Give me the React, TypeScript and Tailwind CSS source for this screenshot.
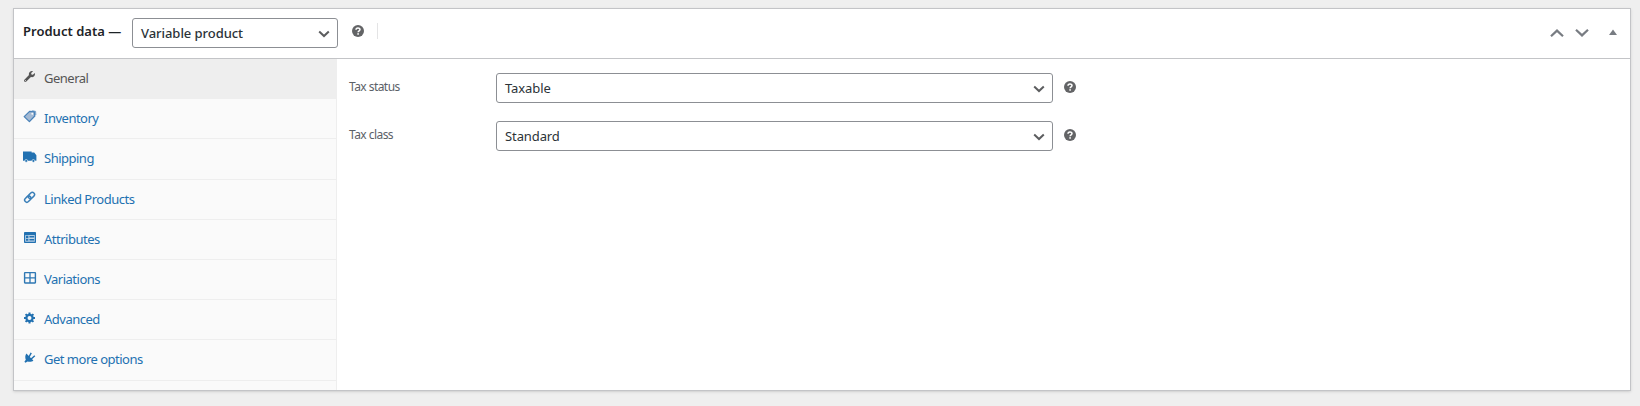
import React from 'react'
import { FaWrench } from 'react-icons/fa'

const TagIcon = () => (
  <svg className="w-3.5 h-3.5" viewBox="0 0 14 14">
    <path
      d="M1.2 6.6 6.6 1.4 11.2 1.6 11.8 6 6.4 11.6Z"
      fill="#a3b9d3"
      stroke="#4a82b8"
      strokeWidth="1.3"
      strokeLinejoin="round"
    />
    <circle cx="9.3" cy="3.7" r="1" fill="#fafafa" />
    <path d="M9.2 .8 12.6 1.4 12.8 5" fill="none" stroke="#5f8fc0" strokeWidth=".9" />
  </svg>
)

const TruckIcon = () => (
  <svg className="w-3.5 h-3.5" viewBox="0 0 14 14" fill="#2271b1">
    <path d="M0 1.4h8.6v1.2h2.6l2.2 2.6v5.6H0z" />
    <circle cx="3.2" cy="10.9" r="1.4" stroke="#fafafa" strokeWidth=".6" />
    <circle cx="10.4" cy="10.9" r="1.4" stroke="#fafafa" strokeWidth=".6" />
  </svg>
)

const LinkIcon = () => (
  <svg
    className="w-3.5 h-3.5"
    viewBox="0 0 14 14"
    fill="none"
    stroke="#3a7fb8"
    strokeWidth="1.5"
  >
    <rect x="4.9" y="2.3" width="7" height="4.4" rx="2.2" transform="rotate(-45 8.4 4.5)" />
    <rect x="1.3" y="5.9" width="7" height="4.4" rx="2.2" transform="rotate(-45 4.8 8.1)" />
  </svg>
)

const AttributesIcon = () => (
  <svg className="w-3.5 h-3.5" viewBox="0 0 14 14">
    <rect x="1" y="1" width="12" height="11" rx=".8" fill="#2271b1" />
    <rect x="2.2" y="4.1" width="9.6" height="6.6" fill="#c3d7e9" />
    <path
      d="M3 4.8h2.4v2.2H3zM6.4 5h4.8v1.5H6.4zM3 7.8h2.4v2H3zM6.4 8h4.8v1.5H6.4z"
      fill="#2271b1"
    />
  </svg>
)

const GridIcon = () => (
  <svg className="w-3.5 h-3.5" viewBox="0 0 14 14" fill="none" stroke="#2f78b4">
    <rect x="1.6" y="1.6" width="10.8" height="10.4" rx=".4" strokeWidth="1.4" />
    <path d="M7 1.6v10.4M1.6 6.8h10.8" strokeWidth="1.3" />
  </svg>
)

const CogIcon = () => (
  <svg className="w-3.5 h-3.5" viewBox="0 0 14 14" fill="none" stroke="#2271b1">
    <circle cx="6.5" cy="7" r="3.1" strokeWidth="2.2" />
    <path
      d="M6.5 1.5v2M6.5 10.5v2M1 7h2M10 7h2M2.6 3.1l1.4 1.4M9 9.5l1.4 1.4M2.6 10.9 4 9.5M9 4.5l1.4-1.4"
      strokeWidth="2"
    />
  </svg>
)

const PlugIcon = () => (
  <svg className="w-3.5 h-3.5" viewBox="0 0 14 14" fill="#2271b1">
    <path d="M3.4 2.6 10.4 9.4C8.8 11 6.4 11.2 4.6 10.4L2.4 11.8 1.4 10.8 2.8 8.8C2 7 2 4.4 3.4 2.6Z" />
    <path d="M6 6 8.2 1.8M8.2 8 11.8 4.8" stroke="#2271b1" strokeWidth="1.5" />
  </svg>
)

const HelpIcon = () => (
  <svg className="w-3 h-3 shrink-0" viewBox="0 0 12 12">
    <circle cx="6" cy="6" r="6" fill="#636466" />
    <path
      d="M4 4.7C4 2.4 8 2.4 8 4.6 8 5.9 6.1 5.8 6.1 7.3"
      fill="none"
      stroke="#fff"
      strokeWidth="1.5"
    />
    <rect x="5.3" y="8.2" width="1.6" height="1.5" fill="#fff" />
  </svg>
)

const tabs = [
  { label: 'General', icon: <FaWrench className="w-[11px] h-[11px] ml-px mt-px" />, active: true },
  { label: 'Inventory', icon: <TagIcon /> },
  { label: 'Shipping', icon: <TruckIcon /> },
  { label: 'Linked Products', icon: <LinkIcon /> },
  { label: 'Attributes', icon: <AttributesIcon /> },
  { label: 'Variations', icon: <GridIcon /> },
  { label: 'Advanced', icon: <CogIcon /> },
  { label: 'Get more options', icon: <PlugIcon /> },
]

interface SelectBoxProps {
  value: string
  className: string
}

const SelectBox: React.FC<SelectBoxProps> = ({ value, className }) => (
  <button
    className={`flex items-center justify-between h-[30px] shrink-0 border border-[#8c8f94] rounded-[3px] bg-white pl-2 pr-[7px] text-[#2c3338] ${className}`}
  >
    <span>{value}</span>
    <svg className="w-3 h-3 mt-px" viewBox="0 0 12 12" fill="none" stroke="#5c5d5f">
      <path d="M1.2 3.6 6 8.1l4.8-4.5" strokeWidth="2" />
    </svg>
  </button>
)

const fields = [
  { label: 'Tax status', value: 'Taxable' },
  { label: 'Tax class', value: 'Standard' },
]

const App: React.FC = () => {
  return (
    <div className="h-[406px] bg-[#efefef] pt-2 pl-[13px] pr-[9px] font-['Noto_Sans','Open_Sans',sans-serif] text-[13px] leading-5 whitespace-nowrap">
      <div className="flex flex-col h-[383px] bg-white border border-[#c3c4c7] shadow-sm">
        <div className="flex h-[50px] shrink-0 border-b border-[#c3c4c7] pl-[9px] pr-[13px]">
          <h2 className="w-[109px] pt-3 font-semibold tracking-[0.02px] text-[#1d2327]">
            Product data —
          </h2>
          <div className="pt-[9px]">
            <SelectBox value="Variable product" className="w-[206px] font-medium tracking-[-0.05px]" />
          </div>
          <div className="pt-4 ml-3.5">
            <HelpIcon />
          </div>
          <div className="w-px h-4 mt-3.5 ml-[13px] bg-[#e4e4e5]" />
          <div className="flex items-start ml-auto pt-4">
            <svg className="w-3.5 h-3.5" viewBox="0 0 14 14" fill="none" stroke="#787c82">
              <path d="M1 11.2 7 5.6l6 5.6" strokeWidth="2.2" />
            </svg>
            <svg className="w-3.5 h-3.5 ml-[11px]" viewBox="0 0 14 14" fill="none" stroke="#787c82">
              <path d="M1 4.8 7 10.4l6-5.6" strokeWidth="2.2" />
            </svg>
            <svg className="w-2 h-3.5 ml-5" viewBox="0 0 8 14" fill="#787c82">
              <path d="M4 4.4 8 10H0z" />
            </svg>
          </div>
        </div>

        <div className="flex flex-1 min-h-0">
          <ul className="w-[323px] shrink-0 bg-[#fafafa] border-r border-[#eeeeee]">
            {tabs.map((tab) => (
              <li
                key={tab.label}
                className={`flex h-[40.2px] pl-[9px] border-b border-[#eeeeee] ${
                  tab.active ? 'bg-[#eeeeee] text-[#555555]' : 'text-[#2271b1]'
                }`}
              >
                <span className="w-[21px] pt-[11px]">{tab.icon}</span>
                <span className="pt-[9px] tracking-[-0.5px]">{tab.label}</span>
              </li>
            ))}
          </ul>

          <div className="flex flex-col gap-[18px] pt-[14px] pl-3">
            {fields.map((field) => (
              <div key={field.label} className="flex h-[30px]">
                <label className="w-[147px] pt-1 text-xs leading-5 tracking-[-0.55px] text-[#5b6168]">
                  {field.label}
                </label>
                <SelectBox value={field.value} className="w-[557px] tracking-[-0.1px]" />
                <div className="pt-[7.5px] ml-[11px]">
                  <HelpIcon />
                </div>
              </div>
            ))}
          </div>
        </div>
      </div>
    </div>
  )
}

export default App
